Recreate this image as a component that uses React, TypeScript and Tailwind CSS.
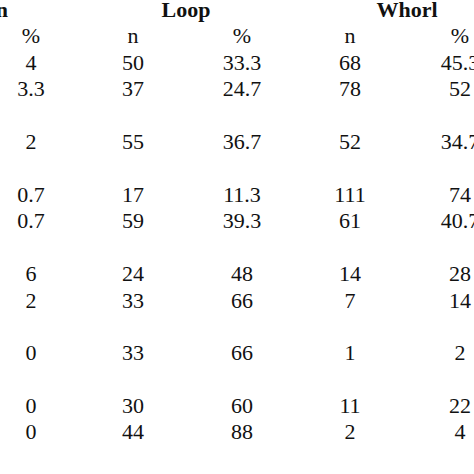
const rows: (string[] | null)[] = [
  ['4', '50', '33.3', '68', '45.3'],
  ['3.3', '37', '24.7', '78', '52'],
  null,
  ['2', '55', '36.7', '52', '34.7'],
  null,
  ['0.7', '17', '11.3', '111', '74'],
  ['0.7', '59', '39.3', '61', '40.7'],
  null,
  ['6', '24', '48', '14', '28'],
  ['2', '33', '66', '7', '14'],
  null,
  ['0', '33', '66', '1', '2'],
  null,
  ['0', '30', '60', '11', '22'],
  ['0', '44', '88', '2', '4'],
]

const cols = 'grid grid-cols-[102px_102px_116px_100px_120px]'

export default function App() {
  return (
    <div
      className="w-[474px] h-[474px] overflow-hidden bg-white text-[#111] text-[22px]"
      style={{ fontFamily: '"Liberation Serif", "Times New Roman", serif' }}
    >
      <div className="-ml-[20px] -mt-[2px] w-[540px]">
        <div className={`${cols} h-[24px] leading-[24px] font-bold`}>
          <div className="flex justify-end pr-[74px] whitespace-nowrap">Pattern</div>
          <div className="col-span-2 text-center pr-[10px]">Loop</div>
          <div className="col-span-2 text-center pr-[6px]">Whorl</div>
        </div>
        <div className={`${cols} h-[28px] leading-[28px] text-center`}>
          <div>%</div>
          <div>n</div>
          <div>%</div>
          <div>n</div>
          <div>%</div>
        </div>
        {rows.map((r, i) => (
          <div key={i} className={`${cols} h-[26.4px] leading-[26.4px] text-center`}>
            {r ? r.map((v, j) => <div key={j}>{v}</div>) : null}
          </div>
        ))}
      </div>
    </div>
  )
}
